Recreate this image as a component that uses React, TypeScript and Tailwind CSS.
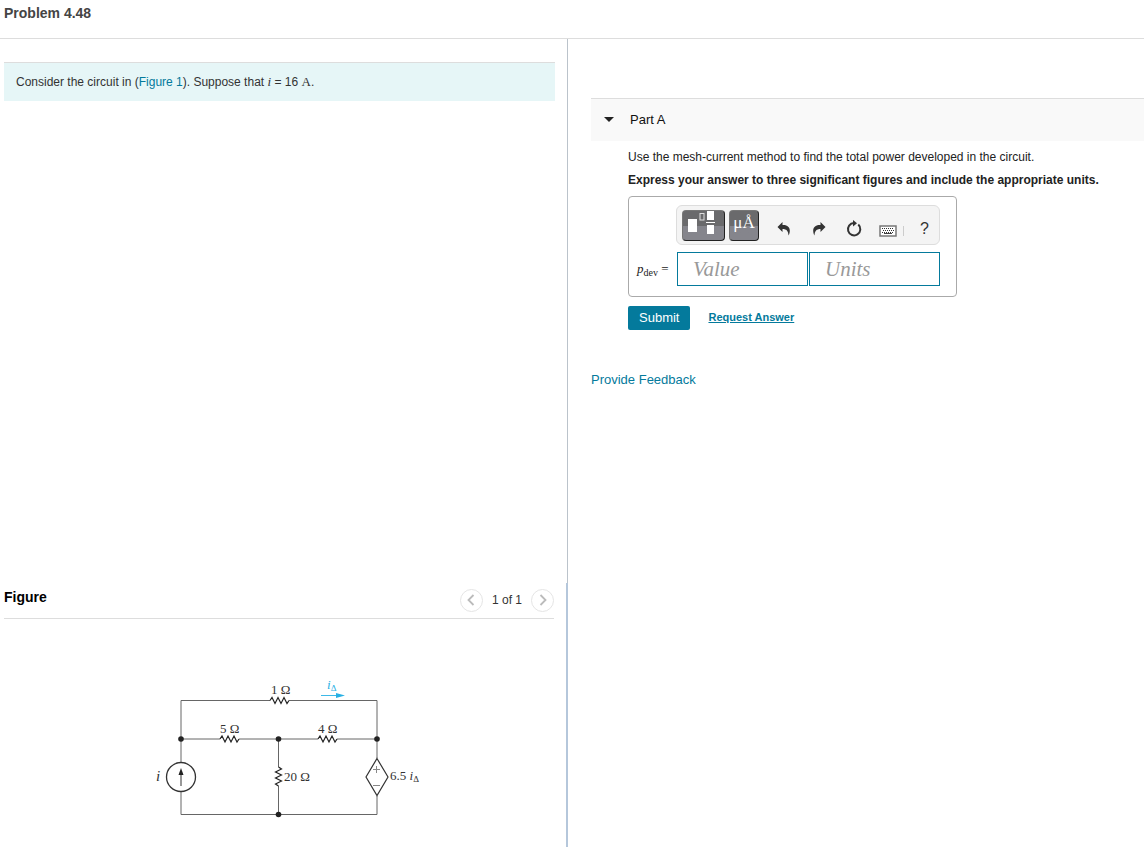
import React from "react";

const Resistor: React.FC<{ x: number; y: number; vertical?: boolean }> = ({ x, y, vertical }) => (
  <path
    d="M-10 0 L-8 -3 L-5 3 L-2 -3 L1 3 L4 -3 L7 3 L9 0"
    transform={`translate(${x} ${y})${vertical ? " rotate(90)" : ""}`}
    stroke="#222"
    strokeWidth="1.2"
    fill="none"
  />
);

const Circuit: React.FC = () => (
  <svg
    width="320"
    height="160"
    viewBox="130 670 320 160"
    role="img"
    aria-label="Circuit diagram"
    className="font-['Liberation_Serif',serif] text-[13px]"
  >
    {/* wires */}
    <g stroke="#666" strokeWidth="1" fill="none">
      <path d="M270 700.5H181V762M289 700.5H377V758M181 739H220M239 739H318M337 739H377" />
      <path d="M181 792V814.5H377V796M278.5 739V767M278.5 786V814" />
    </g>
    <Resistor x={280} y={700.5} />
    <Resistor x={230} y={739} />
    <Resistor x={328} y={739} />
    <Resistor x={278.5} y={777} vertical />
    <g fill="#222">
      <circle cx="181" cy="739" r="2.8" />
      <circle cx="278.5" cy="739" r="2.8" />
      <circle cx="377" cy="739" r="2.8" />
      <circle cx="278.5" cy="814.5" r="2.8" />
    </g>
    {/* current source */}
    <circle cx="181" cy="777" r="14.5" fill="#fff" stroke="#333" strokeWidth="1.3" />
    <path d="M181 786V774" stroke="#333" />
    <path d="M181 768L183.5 775H178.5Z" fill="#222" />
    {/* dependent source */}
    <path d="M377 758.5L388 777L377 795.5L366 777Z" fill="#fff" stroke="#333" strokeWidth="1.2" />
    <path d="M373 769.5H380M376.5 766V773M373 785.5H380" stroke="#888" strokeWidth="1" />
    <path d="M321 695.5H338" stroke="#3db9e8" />
    <path d="M336 693L345 695.5L336 698Z" fill="#28b0e4" />
    <g fill="#333">
      <text x="271" y="694">1 Ω</text>
      <text x="220" y="733">5 Ω</text>
      <text x="318" y="733">4 Ω</text>
      <text x="284" y="781">20 Ω</text>
      <text x="390" y="780">
        6.5 <tspan fontStyle="italic">i</tspan>
        <tspan fontSize="9" dy="2">Δ</tspan>
      </text>
      <text x="156" y="781" fontSize="15" fontStyle="italic">i</text>
    </g>
    <text x="327" y="689" fill="#28b0e4">
      <tspan fontStyle="italic">i</tspan>
      <tspan fontSize="9" dy="2">Δ</tspan>
    </text>
  </svg>
);

const UndoIcon: React.FC<{ flip?: boolean }> = ({ flip }) => (
  <svg width="14" height="16" viewBox="0 0 14 16" className={flip ? "-scale-x-100" : ""}>
    <path d="M0.5 6L5.5 1V4C10 3.6 13 6 12.8 10C12.7 12 12.3 13 11.5 14.5C11.3 10 9.5 8 5.5 8V11Z" fill="#333" />
  </svg>
);

const ResetIcon: React.FC = () => (
  <svg width="18" height="18" viewBox="0 0 18 18">
    <path d="M13.3 4.6A6.2 6.2 0 1 1 9 3" fill="none" stroke="#333" strokeWidth="2" />
    <path d="M8 0L12 3.2L8 6.5Z" fill="#333" />
  </svg>
);

const KeyboardIcon: React.FC = () => (
  <svg width="18" height="12" viewBox="0 0 18 12">
    <rect x="1" y="1" width="16" height="10" fill="#fff" stroke="#777" strokeWidth="1.5" />
    <path d="M3 3.5H15M4 5.5H15M3 7.5H15" stroke="#333" strokeDasharray="1 1" />
    <path d="M5 8.5H13" stroke="#444" />
  </svg>
);

const TemplateIcon: React.FC = () => (
  <svg width="41" height="29" viewBox="0 0 41 29">
    <rect x="5" y="8" width="9" height="13" fill="#fff" />
    <rect x="17" y="2.5" width="4" height="6.5" fill="none" stroke="#ddd" />
    <rect x="24" y="0" width="7" height="9" fill="#fff" />
    <path d="M23 11.5H32" stroke="#fff" />
    <rect x="24" y="14" width="7" height="9" fill="#fff" />
  </svg>
);

const ProblemStatement: React.FC = () => (
  <div className="mt-[23px] ml-1 mr-3 border-t border-[#ddd] bg-[#e6f6f7] px-3 py-2.5 text-[12px] leading-[18px] text-[#333]">
    Consider the circuit in (
    <a href="#figure" className="text-[#047a9c]">Figure 1</a>
    ). Suppose that <i className="font-['Liberation_Serif',serif] text-[13px]">i</i> = 16{" "}
    <span className="font-['Liberation_Serif',serif] text-[13px]">A</span>.
  </div>
);

const FigurePanel: React.FC = () => (
  <section id="figure" className="border-r-2 border-[#b5c7db] pl-1 pr-3">
    <div className="flex h-9 items-center justify-between border-b border-[#ddd]">
      <h2 className="pb-2 text-[14px] leading-5 font-bold text-black">Figure</h2>
      <div className="flex items-center gap-[9px] pb-px text-[12px] text-[#333]">
        <button aria-label="Previous figure" className="flex size-[23px] items-center justify-center rounded-full border border-[#e5e5e5]">
          <svg width="8" height="12" viewBox="0 0 8 12" fill="none" stroke="#bbb" strokeWidth="1.8">
            <path d="M6.5 1L1.5 6L6.5 11" />
          </svg>
        </button>
        <span>1 of 1</span>
        <button aria-label="Next figure" className="flex size-[23px] items-center justify-center rounded-full border border-[#e5e5e5]">
          <svg width="8" height="12" viewBox="0 0 8 12" fill="none" stroke="#bbb" strokeWidth="1.8">
            <path d="M1.5 1L6.5 6L1.5 11" />
          </svg>
        </button>
      </div>
    </div>
    <div className="flex justify-center pt-[51px] pb-[17px] pl-[22px]">
      <Circuit />
    </div>
  </section>
);

const darkButton =
  "flex h-[31px] items-center justify-center rounded-[4px] border border-t-[#777] border-r-[#222] border-b-[#222] border-l-[#777] bg-linear-to-b from-[#6a6a6c] from-50% to-[#85858c] to-50% text-white";

const toolButton = "flex w-[35px] items-center justify-center";

const AnswerBox: React.FC = () => (
  <div className="mt-[7px] w-[329px] rounded-[4px] border border-[#aaa] pt-2 pr-4 pb-[10px] pl-2">
    <div className="ml-[39px] flex h-10 items-center rounded-[6px] border border-[#ddd] bg-[#f4f4f4] pl-[5px]">
      <button aria-label="Templates" className={`${darkButton} w-[43px]`}>
        <TemplateIcon />
      </button>
      <button aria-label="Symbols" className={`${darkButton} ml-1 w-[30px] pb-1 font-['Liberation_Serif',serif] text-[17px]`}>
        μÅ
      </button>
      <div className="flex flex-1 items-center pt-[7px] pl-[7px]">
        <button aria-label="Undo" className={toolButton}><UndoIcon /></button>
        <button aria-label="Redo" className={toolButton}><UndoIcon flip /></button>
        <button aria-label="Reset" className={toolButton}><ResetIcon /></button>
        <div className="flex items-center gap-1.5 pt-1 pl-2">
          <button aria-label="Keyboard shortcuts"><KeyboardIcon /></button>
          <span className="h-2.5 w-px bg-[#ccc]" />
        </div>
        <button aria-label="Help" className="ml-auto pr-2.5 text-[16px] leading-4 text-[#333]">?</button>
      </div>
    </div>
    <div className="mt-[7px] flex items-center">
      <label htmlFor="value" className="w-10 shrink-0 font-['Liberation_Serif',serif] text-[13px] text-[#222]">
        <i>p</i>
        <sub className="text-[10px]">dev</sub> =
      </label>
      <div className="flex flex-1 gap-px font-['Liberation_Serif',serif] text-[21px] italic">
        <input id="value" placeholder="Value" className="h-[34px] w-0 flex-1 border border-[#047a9c] px-[15px] placeholder:text-[#999]" />
        <input aria-label="Units" placeholder="Units" className="h-[34px] w-0 flex-1 border border-[#047a9c] px-[15px] placeholder:text-[#999]" />
      </div>
    </div>
  </div>
);

const App: React.FC = () => {
  return (
    <div className="flex min-h-screen flex-col bg-white font-['Liberation_Sans',Arial,sans-serif]">
      <header className="h-[39px] border-b border-[#ddd] pt-[3px] pl-1">
        <h1 className="text-[14px] leading-5 font-bold text-[#444]">Problem 4.48</h1>
      </header>
      <main className="grid flex-1 grid-cols-[568fr_576fr]">
        <div className="flex flex-col">
          <div className="flex-1 border-r border-[#bbc3cb]">
            <ProblemStatement />
          </div>
          <FigurePanel />
        </div>

        <div className="pt-[59px] pl-[23px]">
          <button className="flex h-[43px] w-full items-center border-t border-[#ddd] bg-[#f9f9f9] pl-[13px] text-[13px] text-[#111]">
            <svg width="10" height="6" viewBox="0 0 10 6" className="mr-4">
              <path d="M0 0H10L5 5Z" fill="#222" />
            </svg>
            Part A
          </button>
          <div className="pl-[37px] text-[12px] leading-[18px] text-[#222]">
            <p className="pt-[7px]">Use the mesh-current method to find the total power developed in the circuit.</p>
            <p className="pt-[5px] font-bold">Express your answer to three significant figures and include the appropriate units.</p>
            <AnswerBox />
            <div className="mt-[9px] flex items-center gap-[18px]">
              <button className="h-6 rounded-[2px] bg-[#047a9c] px-[11px] text-[13px] text-white">Submit</button>
              <a href="#request" className="pb-0.5 text-[11px] font-bold text-[#047a9c] underline">Request Answer</a>
            </div>
          </div>
          <a href="#feedback" className="mt-10 inline-block text-[13px] leading-5 text-[#047a9c]">Provide Feedback</a>
        </div>
      </main>
    </div>
  );
};

export default App;
